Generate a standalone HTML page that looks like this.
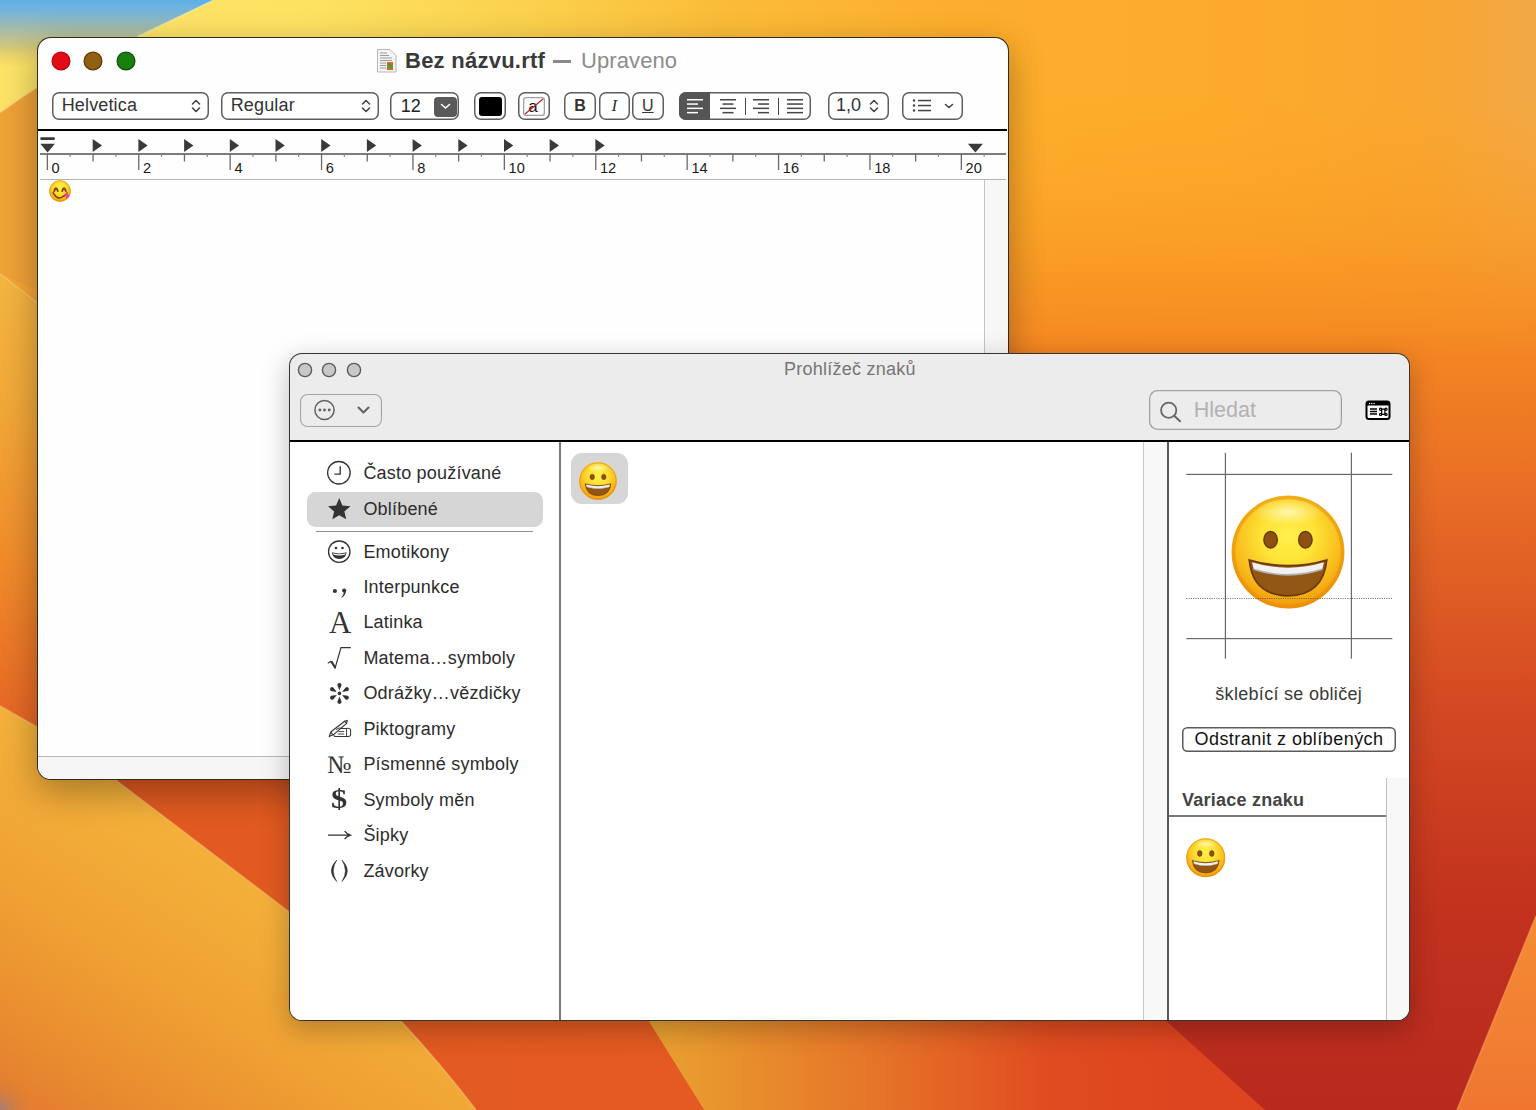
<!DOCTYPE html><html><head><meta charset="utf-8"><style>
html,body{margin:0;padding:0;} body{width:1536px;height:1110px;overflow:hidden;position:relative;font-family:"Liberation Sans", sans-serif;background:#f0a030;}
.t{position:absolute;white-space:nowrap;} .r{position:absolute;box-sizing:border-box;} svg.r{overflow:visible;}
</style></head><body>
<svg width="0" height="0" style="position:absolute">
<defs>
 <radialGradient id="gface" cx="0.5" cy="0.36" r="0.68">
  <stop offset="0" stop-color="#fff04a"/>
  <stop offset="0.35" stop-color="#fde336"/>
  <stop offset="0.7" stop-color="#f9bb1c"/>
  <stop offset="0.92" stop-color="#f19a08"/>
  <stop offset="1" stop-color="#ea8a04"/>
 </radialGradient>
 <radialGradient id="ghl" cx="0.5" cy="0.5" r="0.5">
  <stop offset="0" stop-color="#fffbd0" stop-opacity="0.8"/>
  <stop offset="1" stop-color="#fff8a0" stop-opacity="0"/>
 </radialGradient>
 <symbol id="grin" viewBox="-1 -1 2 2">
  <circle cx="0" cy="0" r="0.99" fill="url(#gface)"/>
  <circle cx="0" cy="0" r="0.955" fill="none" stroke="#e8860a" stroke-width="0.06" opacity="0.5"/>
  <ellipse cx="0" cy="-0.7" rx="0.62" ry="0.24" fill="url(#ghl)"/>
  <ellipse cx="-0.305" cy="-0.215" rx="0.118" ry="0.146" fill="#8c5010" stroke="#6a3806" stroke-width="0.025"/>
  <ellipse cx="0.305" cy="-0.215" rx="0.118" ry="0.146" fill="#8c5010" stroke="#6a3806" stroke-width="0.025"/>
  <path d="M-0.68 0.14 Q0 0.34 0.68 0.14 Q0.62 0.76 0 0.77 Q-0.62 0.76 -0.68 0.14 Z" fill="#925614" stroke="#6a3806" stroke-width="0.03"/>
  <path d="M-0.63 0.18 Q0 0.37 0.63 0.18 L0.60 0.31 Q0 0.50 -0.60 0.31 Z" fill="#f1f1f1"/>
  <path d="M-0.60 0.29 Q0 0.48 0.60 0.29 L0.59 0.32 Q0 0.51 -0.59 0.32 Z" fill="#b0b0b0"/>
 </symbol>
 <symbol id="yum" viewBox="-1 -1 2 2">
  <circle cx="0" cy="0" r="0.98" fill="url(#gface)"/>
  <circle cx="0" cy="0" r="0.94" fill="none" stroke="#e88400" stroke-width="0.08" opacity="0.6"/>
  <path d="M-0.52 0.0 Q-0.37 -0.5 -0.2 0.0" fill="none" stroke="#7a3e06" stroke-width="0.17" stroke-linecap="round"/>
  <path d="M0.2 0.0 Q0.37 -0.5 0.52 0.0" fill="none" stroke="#7a3e06" stroke-width="0.17" stroke-linecap="round"/>
  <path d="M-0.63 0.14 Q-0.3 0.75 0.1 0.6 Q0.45 0.5 0.64 0.18" fill="none" stroke="#7a3e06" stroke-width="0.13" stroke-linecap="round"/>
  <path d="M0.42 0.36 L0.62 0.16 L0.88 0.45 L0.62 0.72 Z" fill="#f0449a"/>
 </symbol>
</defs></svg>
<svg class="r" style="left:0;top:0" width="1536" height="1110">
<defs>
 <linearGradient id="wbase" gradientUnits="userSpaceOnUse" x1="0" y1="0" x2="0" y2="1110">
  <stop offset="0" stop-color="#fdab28"/>
  <stop offset="0.18" stop-color="#fa9a22"/>
  <stop offset="0.3" stop-color="#f58822"/>
  <stop offset="0.45" stop-color="#e86c26"/>
  <stop offset="0.63" stop-color="#d44a22"/>
  <stop offset="0.82" stop-color="#c2321e"/>
  <stop offset="1" stop-color="#b82a1e"/>
 </linearGradient>
 <linearGradient id="wtop" gradientUnits="userSpaceOnUse" x1="0" y1="0" x2="1536" y2="0">
  <stop offset="0" stop-color="#fde468"/>
  <stop offset="0.2" stop-color="#fde262"/>
  <stop offset="0.35" stop-color="#fbd04c"/>
  <stop offset="0.47" stop-color="#fbbc38"/>
  <stop offset="0.62" stop-color="#fdae2c"/>
  <stop offset="0.8" stop-color="#fdaa2a"/>
  <stop offset="0.93" stop-color="#f8a632"/>
  <stop offset="1" stop-color="#f2a846"/>
 </linearGradient>
 <linearGradient id="mtop" x1="0" y1="0" x2="0" y2="1">
  <stop offset="0" stop-color="#fff"/>
  <stop offset="0.2" stop-color="#fff"/>
  <stop offset="0.75" stop-color="#000"/>
  <stop offset="1" stop-color="#000"/>
 </linearGradient>
 <mask id="mtopm" maskUnits="userSpaceOnUse" x="0" y="0" width="1536" height="480"><rect x="0" y="0" width="1536" height="480" fill="url(#mtop)"/></mask>
 <linearGradient id="wblue" gradientUnits="userSpaceOnUse" x1="0" y1="0" x2="0" y2="80">
  <stop offset="0" stop-color="#5eb0e8"/>
  <stop offset="0.15" stop-color="#78b4d8"/>
  <stop offset="0.38" stop-color="#a8bca8"/>
  <stop offset="0.6" stop-color="#d4c878"/>
  <stop offset="0.85" stop-color="#f0d060" stop-opacity="0"/>
 </linearGradient>
 <linearGradient id="wleft" gradientUnits="userSpaceOnUse" x1="0" y1="270" x2="0" y2="730">
  <stop offset="0" stop-color="#f4b642"/>
  <stop offset="0.3" stop-color="#f2a838"/>
  <stop offset="0.65" stop-color="#f08a2a"/>
  <stop offset="1" stop-color="#e66424"/>
 </linearGradient>
 <linearGradient id="wpetal" gradientUnits="userSpaceOnUse" x1="200" y1="820" x2="20" y2="1110">
  <stop offset="0" stop-color="#f4b23c"/>
  <stop offset="0.45" stop-color="#f0a233"/>
  <stop offset="0.8" stop-color="#e98c2f"/>
  <stop offset="1" stop-color="#e37c30"/>
 </linearGradient>
 <linearGradient id="wband" gradientUnits="userSpaceOnUse" x1="0" y1="800" x2="700" y2="1110">
  <stop offset="0" stop-color="#e05a20"/>
  <stop offset="1" stop-color="#e45a22"/>
 </linearGradient>
 <linearGradient id="wlight" gradientUnits="userSpaceOnUse" x1="660" y1="0" x2="1200" y2="0">
  <stop offset="0" stop-color="#e9a030"/>
  <stop offset="0.4" stop-color="#e67428"/>
  <stop offset="0.72" stop-color="#e04c20"/>
  <stop offset="1" stop-color="#dd4420"/>
 </linearGradient>
 <linearGradient id="wtri" gradientUnits="userSpaceOnUse" x1="0" y1="930" x2="0" y2="1110">
  <stop offset="0" stop-color="#f48a34"/>
  <stop offset="1" stop-color="#f07630"/>
 </linearGradient>
 <radialGradient id="wbl" gradientUnits="userSpaceOnUse" cx="0" cy="1110" r="34">
  <stop offset="0" stop-color="#6a80c0" stop-opacity="0.9"/>
  <stop offset="1" stop-color="#e07a30" stop-opacity="0"/>
 </radialGradient>
</defs>
<rect x="0" y="0" width="1536" height="1110" fill="url(#wbase)"/>
<rect x="0" y="0" width="1536" height="480" fill="url(#wtop)" mask="url(#mtopm)"/>
<!-- left strip: orange below yellow -->
<path d="M0 112.5 Q20 98 60 72 L60 300 L0 274 Z" fill="#efa236"/>
<path d="M0 274 L60 320 L60 740 L0 706 Z" fill="url(#wleft)"/>
<path d="M0 274 L60 320" stroke="#f8d070" stroke-width="1.5" opacity="0.6"/>
<path d="M0 112.5 Q20 98 60 72" stroke="#f8e090" stroke-width="1.5" opacity="0.6" fill="none"/>
<!-- blue corner -->
<path d="M0 0 L214 0 L137.5 36.7 L60 65 L0 90 Z" fill="url(#wblue)"/>
<path d="M214 0 L137.5 36.7" stroke="#e8f0b0" stroke-width="1.5" opacity="0.7"/>
<!-- red-orange band -->
<path d="M37 727 L117 781 L288 911 Q400 1010 476 1110 L704 1110 L648 1020 L560 860 L400 700 L40 700 Z" fill="url(#wband)"/>
<!-- bottom-left light petal -->
<path d="M0 706 L37 727 L117 781 L288 911 Q400 1010 476 1110 L0 1110 Z" fill="url(#wpetal)"/>
<path d="M0 706 L37 727 L117 781 L288 911 Q400 1010 476 1110" stroke="#f8c878" stroke-width="1.5" fill="none" opacity="0.55"/>
<rect x="0" y="1075" width="35" height="35" fill="url(#wbl)" opacity="0.55"/>
<!-- light band -->
<path d="M600 940 L648 1020 L704 1110 L1265 1110 L1165 1020 L1080 940 Z" fill="url(#wlight)"/>
<!-- bottom-right light triangle -->
<path d="M1536 916 L1457 1110 L1536 1110 Z" fill="url(#wtri)"/>
<path d="M1536 916 L1457 1110" stroke="#f8a060" stroke-width="1.5" opacity="0.6"/>
</svg>
<div class="r" style="left:37.00px;top:37.00px;width:972.00px;height:743.00px;background:#fefefe;border-radius:14px;border:1.4px solid rgba(20,12,0,0.88);box-shadow:0 12px 36px rgba(0,0,0,0.32);"></div>
<div class="r" style="left:38.00px;top:756.00px;width:970.00px;height:23.00px;background:#f6f6f6;border-radius:0px;border-radius:0 0 13px 13px;"></div>
<div class="r" style="left:38.00px;top:755.50px;width:970.00px;height:1.00px;background:#b8b8b8;border-radius:0px;"></div>
<div class="r" style="left:984.50px;top:180.00px;width:23.50px;height:576.00px;background:#f7f7f7;border-radius:0px;"></div>
<div class="r" style="left:984.00px;top:180.00px;width:1.20px;height:576.00px;background:#c4c4c4;border-radius:0px;"></div>
<svg class="r" style="left:51.20px;top:51.10px;" width="20" height="20" viewBox="0 0 20 20"><circle cx="10" cy="10" r="8.9" fill="#e30b14" stroke="#b8080e" stroke-width="1.3"/></svg>
<svg class="r" style="left:83.40px;top:51.10px;" width="20" height="20" viewBox="0 0 20 20"><circle cx="10" cy="10" r="8.9" fill="#935f10" stroke="#643806" stroke-width="1.3"/></svg>
<svg class="r" style="left:115.60px;top:51.10px;" width="20" height="20" viewBox="0 0 20 20"><circle cx="10" cy="10" r="8.9" fill="#18800e" stroke="#0c5208" stroke-width="1.3"/></svg>
<svg class="r" style="left:376.00px;top:49.00px;" width="21" height="24" viewBox="0 0 21 24"><path d="M1.5 0.5 H14 L20 6.5 V23 H1.5 Z" fill="#f4f4f4" stroke="#b8b8b8" stroke-width="1"/><path d="M4 4h7M4 6.5h9M4 9h12M4 11.5h12M4 14h6M4 16.5h6M4 19h6" stroke="#9a9a9a" stroke-width="1"/><rect x="11" y="13" width="6" height="8" fill="#d06a20"/><rect x="12" y="15" width="4" height="4" fill="#5a9a30"/></svg>
<div class="t" style="left:405.00px;top:50.08px;font-size:22px;line-height:22px;color:#3a3a3a;font-weight:700;letter-spacing:0.25px;">Bez názvu.rtf</div>
<div class="r" style="left:553.30px;top:60.00px;width:17.90px;height:2.80px;background:#8a8a8a;border-radius:0px;"></div>
<div class="t" style="left:581.00px;top:50.08px;font-size:22px;line-height:22px;color:#8c8c8c;font-weight:400;letter-spacing:0.1px;">Upraveno</div>
<div class="r" style="left:52.20px;top:92.20px;width:156.70px;height:28.30px;background:#fff;border-radius:7px;box-shadow: inset 0 0 0 1.5px #5e5e5e;"></div>
<div class="t" style="left:61.70px;top:95.76px;font-size:18px;line-height:18px;color:#333;font-weight:400;letter-spacing:0.15px;">Helvetica</div>
<svg class="r" style="left:190.90px;top:99.00px;" width="10" height="14" viewBox="0 0 10 14"><path d="M1.5 5 L5 1.5 L8.5 5 M1.5 9 L5 12.5 L8.5 9" fill="none" stroke="#444" stroke-width="1.6" stroke-linecap="round" stroke-linejoin="round"/></svg>
<div class="r" style="left:221.20px;top:92.20px;width:157.50px;height:28.30px;background:#fff;border-radius:7px;box-shadow: inset 0 0 0 1.5px #5e5e5e;"></div>
<div class="t" style="left:230.70px;top:95.76px;font-size:18px;line-height:18px;color:#333;font-weight:400;letter-spacing:0.15px;">Regular</div>
<svg class="r" style="left:360.70px;top:99.00px;" width="10" height="14" viewBox="0 0 10 14"><path d="M1.5 5 L5 1.5 L8.5 5 M1.5 9 L5 12.5 L8.5 9" fill="none" stroke="#444" stroke-width="1.6" stroke-linecap="round" stroke-linejoin="round"/></svg>
<div class="r" style="left:390.30px;top:92.20px;width:68.50px;height:28.30px;background:#fff;border-radius:7px;box-shadow: inset 0 0 0 1.5px #5e5e5e;"></div>
<div class="t" style="left:400.80px;top:96.76px;font-size:18px;line-height:18px;color:#222;font-weight:400;letter-spacing:0px;">12</div>
<div class="r" style="left:434.00px;top:96.60px;width:22.70px;height:20.60px;background:#5a5a5a;border-radius:4px;"></div>
<svg class="r" style="left:440.00px;top:103.00px;" width="11" height="7" viewBox="0 0 11 7"><path d="M1.5 1.5 L5.5 5 L9.5 1.5" fill="none" stroke="#fff" stroke-width="1.6" stroke-linecap="round" stroke-linejoin="round"/></svg>
<div class="r" style="left:473.90px;top:92.20px;width:32.20px;height:28.30px;background:#fff;border-radius:7px;box-shadow: inset 0 0 0 1.5px #5e5e5e;"></div>
<div class="r" style="left:478.50px;top:96.80px;width:23.00px;height:19.20px;background:#000;border-radius:3px;"></div>
<div class="r" style="left:518.00px;top:92.20px;width:31.50px;height:28.30px;background:#fff;border-radius:7px;box-shadow: inset 0 0 0 1.5px #5e5e5e;"></div>
<div class="r" style="left:522.50px;top:96.80px;width:22.50px;height:19.20px;background:#fff;border-radius:3px;box-shadow: inset 0 0 0 1.3px #a0a0a0;"></div>
<div class="t" style="left:528.20px;top:97.61px;font-size:17px;line-height:17px;color:#111;font-weight:400;letter-spacing:0px;">a</div>
<svg class="r" style="left:523.00px;top:97.00px;" width="22" height="19" viewBox="0 0 22 19"><path d="M2 17 L20 2" stroke="#d42020" stroke-width="1.2"/></svg>
<div class="r" style="left:564.00px;top:92.20px;width:32.30px;height:28.30px;background:#fff;border-radius:7px;box-shadow: inset 0 0 0 1.5px #5e5e5e;"></div>
<div class="t" style="left:580.15px;top:97.96px;font-size:16px;line-height:16px;color:#333;font-weight:400;letter-spacing:0px;transform:translateX(-50%);font-weight:700;">B</div>
<div class="r" style="left:598.50px;top:92.20px;width:31.50px;height:28.30px;background:#fff;border-radius:7px;box-shadow: inset 0 0 0 1.5px #5e5e5e;"></div>
<div class="t" style="left:614.25px;top:97.96px;font-size:16px;line-height:16px;color:#333;font-weight:400;letter-spacing:0px;transform:translateX(-50%);font-style:italic;font-family:'Liberation Serif',serif;font-size:17px;">I</div>
<div class="r" style="left:632.00px;top:92.20px;width:31.80px;height:28.30px;background:#fff;border-radius:7px;box-shadow: inset 0 0 0 1.5px #5e5e5e;"></div>
<div class="t" style="left:647.90px;top:97.96px;font-size:16px;line-height:16px;color:#333;font-weight:400;letter-spacing:0px;transform:translateX(-50%);text-decoration:underline;">U</div>
<div class="r" style="left:678.90px;top:92.20px;width:132.30px;height:28.30px;background:#fff;border-radius:7px;box-shadow: inset 0 0 0 1.5px #5e5e5e;"></div>
<div class="r" style="left:678.90px;top:92.20px;width:31.50px;height:28.30px;background:#555;border-radius:7px;border-radius:7px 0 0 7px;"></div>
<svg class="r" style="left:686.50px;top:97.50px;" width="16" height="16" viewBox="0 0 16 16"><rect x="0" y="1.0" width="16" height="1.5" fill="#fff"/><rect x="0" y="5.3" width="11" height="1.5" fill="#fff"/><rect x="0" y="9.6" width="16" height="1.5" fill="#fff"/><rect x="0" y="13.899999999999999" width="11" height="1.5" fill="#fff"/></svg>
<svg class="r" style="left:720.00px;top:97.50px;" width="16" height="16" viewBox="0 0 16 16"><rect x="0.0" y="1.0" width="16" height="1.5" fill="#444"/><rect x="2.5" y="5.3" width="11" height="1.5" fill="#444"/><rect x="0.0" y="9.6" width="16" height="1.5" fill="#444"/><rect x="2.5" y="13.899999999999999" width="11" height="1.5" fill="#444"/></svg>
<div class="r" style="left:744.80px;top:97.50px;width:1.40px;height:17.50px;background:#444;border-radius:0px;"></div>
<svg class="r" style="left:753.00px;top:97.50px;" width="16" height="16" viewBox="0 0 16 16"><rect x="0" y="1.0" width="16" height="1.5" fill="#444"/><rect x="5" y="5.3" width="11" height="1.5" fill="#444"/><rect x="0" y="9.6" width="16" height="1.5" fill="#444"/><rect x="5" y="13.899999999999999" width="11" height="1.5" fill="#444"/></svg>
<div class="r" style="left:777.50px;top:97.50px;width:1.40px;height:17.50px;background:#444;border-radius:0px;"></div>
<svg class="r" style="left:787.00px;top:97.50px;" width="16" height="16" viewBox="0 0 16 16"><rect x="0" y="1.0" width="16" height="1.5" fill="#444"/><rect x="0" y="5.3" width="16" height="1.5" fill="#444"/><rect x="0" y="9.6" width="16" height="1.5" fill="#444"/><rect x="0" y="13.899999999999999" width="16" height="1.5" fill="#444"/></svg>
<div class="r" style="left:827.50px;top:92.20px;width:61.10px;height:28.30px;background:#fff;border-radius:7px;box-shadow: inset 0 0 0 1.5px #5e5e5e;"></div>
<div class="t" style="left:836.00px;top:95.76px;font-size:18px;line-height:18px;color:#333;font-weight:400;letter-spacing:0px;">1,0</div>
<svg class="r" style="left:869.00px;top:99.00px;" width="10" height="14" viewBox="0 0 10 14"><path d="M1.5 5 L5 1.5 L8.5 5 M1.5 9 L5 12.5 L8.5 9" fill="none" stroke="#444" stroke-width="1.6" stroke-linecap="round" stroke-linejoin="round"/></svg>
<div class="r" style="left:901.50px;top:92.20px;width:61.50px;height:28.30px;background:#fff;border-radius:7px;box-shadow: inset 0 0 0 1.5px #5e5e5e;"></div>
<svg class="r" style="left:912.00px;top:98.00px;" width="22" height="16" viewBox="0 0 22 16"><circle cx="2" cy="2.5" r="1.2" fill="#444"/><rect x="6" y="1.8" width="13" height="1.5" fill="#444"/><circle cx="2" cy="7.5" r="1.2" fill="#444"/><rect x="6" y="6.8" width="13" height="1.5" fill="#444"/><circle cx="2" cy="12.5" r="1.2" fill="#444"/><rect x="6" y="11.8" width="13" height="1.5" fill="#444"/></svg>
<svg class="r" style="left:944.00px;top:103.00px;" width="10" height="7" viewBox="0 0 10 7"><path d="M1.5 1.5 L5 4.5 L8.5 1.5" fill="none" stroke="#444" stroke-width="1.6" stroke-linecap="round" stroke-linejoin="round"/></svg>
<div class="r" style="left:38.00px;top:128.60px;width:968.50px;height:2.00px;background:#000;border-radius:0px;"></div>
<div class="r" style="left:40.00px;top:153.30px;width:966.00px;height:1.50px;background:#7c7c7c;border-radius:0px;"></div>
<svg class="r" style="left:0.00px;top:0.00px;" width="1536" height="200" viewBox="0 0 1536 200"><rect x="46.70" y="154" width="1.3" height="16" fill="#6a6a6a"/><rect x="69.55" y="154" width="1.2" height="3" fill="#8a8a8a"/><rect x="92.40" y="154" width="1.3" height="7.5" fill="#6a6a6a"/><rect x="115.25" y="154" width="1.2" height="3" fill="#8a8a8a"/><rect x="138.10" y="154" width="1.3" height="16" fill="#6a6a6a"/><rect x="160.95" y="154" width="1.2" height="3" fill="#8a8a8a"/><rect x="183.80" y="154" width="1.3" height="7.5" fill="#6a6a6a"/><rect x="206.65" y="154" width="1.2" height="3" fill="#8a8a8a"/><rect x="229.50" y="154" width="1.3" height="16" fill="#6a6a6a"/><rect x="252.35" y="154" width="1.2" height="3" fill="#8a8a8a"/><rect x="275.20" y="154" width="1.3" height="7.5" fill="#6a6a6a"/><rect x="298.05" y="154" width="1.2" height="3" fill="#8a8a8a"/><rect x="320.90" y="154" width="1.3" height="16" fill="#6a6a6a"/><rect x="343.75" y="154" width="1.2" height="3" fill="#8a8a8a"/><rect x="366.60" y="154" width="1.3" height="7.5" fill="#6a6a6a"/><rect x="389.45" y="154" width="1.2" height="3" fill="#8a8a8a"/><rect x="412.30" y="154" width="1.3" height="16" fill="#6a6a6a"/><rect x="435.15" y="154" width="1.2" height="3" fill="#8a8a8a"/><rect x="458.00" y="154" width="1.3" height="7.5" fill="#6a6a6a"/><rect x="480.85" y="154" width="1.2" height="3" fill="#8a8a8a"/><rect x="503.70" y="154" width="1.3" height="16" fill="#6a6a6a"/><rect x="526.55" y="154" width="1.2" height="3" fill="#8a8a8a"/><rect x="549.40" y="154" width="1.3" height="7.5" fill="#6a6a6a"/><rect x="572.25" y="154" width="1.2" height="3" fill="#8a8a8a"/><rect x="595.10" y="154" width="1.3" height="16" fill="#6a6a6a"/><rect x="617.95" y="154" width="1.2" height="3" fill="#8a8a8a"/><rect x="640.80" y="154" width="1.3" height="7.5" fill="#6a6a6a"/><rect x="663.65" y="154" width="1.2" height="3" fill="#8a8a8a"/><rect x="686.50" y="154" width="1.3" height="16" fill="#6a6a6a"/><rect x="709.35" y="154" width="1.2" height="3" fill="#8a8a8a"/><rect x="732.20" y="154" width="1.3" height="7.5" fill="#6a6a6a"/><rect x="755.05" y="154" width="1.2" height="3" fill="#8a8a8a"/><rect x="777.90" y="154" width="1.3" height="16" fill="#6a6a6a"/><rect x="800.75" y="154" width="1.2" height="3" fill="#8a8a8a"/><rect x="823.60" y="154" width="1.3" height="7.5" fill="#6a6a6a"/><rect x="846.45" y="154" width="1.2" height="3" fill="#8a8a8a"/><rect x="869.30" y="154" width="1.3" height="16" fill="#6a6a6a"/><rect x="892.15" y="154" width="1.2" height="3" fill="#8a8a8a"/><rect x="915.00" y="154" width="1.3" height="7.5" fill="#6a6a6a"/><rect x="937.85" y="154" width="1.2" height="3" fill="#8a8a8a"/><rect x="960.70" y="154" width="1.3" height="16" fill="#6a6a6a"/><rect x="983.55" y="154" width="1.2" height="3" fill="#8a8a8a"/><path d="M92.70 139 L102.00 145.5 L92.70 152 Z" fill="#3a3a3a"/><path d="M138.40 139 L147.70 145.5 L138.40 152 Z" fill="#3a3a3a"/><path d="M184.10 139 L193.40 145.5 L184.10 152 Z" fill="#3a3a3a"/><path d="M229.80 139 L239.10 145.5 L229.80 152 Z" fill="#3a3a3a"/><path d="M275.50 139 L284.80 145.5 L275.50 152 Z" fill="#3a3a3a"/><path d="M321.20 139 L330.50 145.5 L321.20 152 Z" fill="#3a3a3a"/><path d="M366.90 139 L376.20 145.5 L366.90 152 Z" fill="#3a3a3a"/><path d="M412.60 139 L421.90 145.5 L412.60 152 Z" fill="#3a3a3a"/><path d="M458.30 139 L467.60 145.5 L458.30 152 Z" fill="#3a3a3a"/><path d="M504.00 139 L513.30 145.5 L504.00 152 Z" fill="#3a3a3a"/><path d="M549.70 139 L559.00 145.5 L549.70 152 Z" fill="#3a3a3a"/><path d="M595.40 139 L604.70 145.5 L595.40 152 Z" fill="#3a3a3a"/><rect x="40.3" y="137.3" width="14.6" height="2.8" rx="1" fill="#3a3a3a"/><path d="M40.3 143.8 L54.9 143.8 L47.6 152.4 Z" fill="#3a3a3a"/><path d="M967.90 143.8 L982.90 143.8 L975.40 152.4 Z" fill="#3a3a3a"/></svg>
<div class="t" style="left:51.60px;top:161.44px;font-size:14.6px;line-height:14.6px;color:#1a1a1a;font-weight:400;letter-spacing:0px;">0</div>
<div class="t" style="left:143.00px;top:161.44px;font-size:14.6px;line-height:14.6px;color:#1a1a1a;font-weight:400;letter-spacing:0px;">2</div>
<div class="t" style="left:234.40px;top:161.44px;font-size:14.6px;line-height:14.6px;color:#1a1a1a;font-weight:400;letter-spacing:0px;">4</div>
<div class="t" style="left:325.80px;top:161.44px;font-size:14.6px;line-height:14.6px;color:#1a1a1a;font-weight:400;letter-spacing:0px;">6</div>
<div class="t" style="left:417.20px;top:161.44px;font-size:14.6px;line-height:14.6px;color:#1a1a1a;font-weight:400;letter-spacing:0px;">8</div>
<div class="t" style="left:508.60px;top:161.44px;font-size:14.6px;line-height:14.6px;color:#1a1a1a;font-weight:400;letter-spacing:0px;">10</div>
<div class="t" style="left:600.00px;top:161.44px;font-size:14.6px;line-height:14.6px;color:#1a1a1a;font-weight:400;letter-spacing:0px;">12</div>
<div class="t" style="left:691.40px;top:161.44px;font-size:14.6px;line-height:14.6px;color:#1a1a1a;font-weight:400;letter-spacing:0px;">14</div>
<div class="t" style="left:782.80px;top:161.44px;font-size:14.6px;line-height:14.6px;color:#1a1a1a;font-weight:400;letter-spacing:0px;">16</div>
<div class="t" style="left:874.20px;top:161.44px;font-size:14.6px;line-height:14.6px;color:#1a1a1a;font-weight:400;letter-spacing:0px;">18</div>
<div class="t" style="left:965.60px;top:161.44px;font-size:14.6px;line-height:14.6px;color:#1a1a1a;font-weight:400;letter-spacing:0px;">20</div>
<div class="r" style="left:40.00px;top:179.00px;width:966.00px;height:1.20px;background:#b4b4b4;border-radius:0px;"></div>
<svg class="r" style="left:48.70px;top:179.90px;" width="22" height="22" viewBox="0 0 22 22"><use href="#yum" x="0" y="0" width="22" height="22"/></svg>
<div class="r" style="left:289.00px;top:353.00px;width:1121.00px;height:668.00px;background:#ececec;border-radius:13px;border:1.4px solid rgba(0,0,0,0.78);box-shadow:0 8px 28px rgba(0,0,0,0.26);"></div>
<div class="r" style="left:290.20px;top:442.00px;width:1118.60px;height:577.80px;background:#fff;border-radius:0px;border-radius:0 0 12px 12px;"></div>
<svg class="r" style="left:297.20px;top:361.70px;" width="16" height="16" viewBox="0 0 16 16"><circle cx="8" cy="8" r="6.6" fill="#c8c8c8" stroke="#5c5c5c" stroke-width="1.4"/></svg>
<svg class="r" style="left:321.40px;top:361.70px;" width="16" height="16" viewBox="0 0 16 16"><circle cx="8" cy="8" r="6.6" fill="#c8c8c8" stroke="#5c5c5c" stroke-width="1.4"/></svg>
<svg class="r" style="left:345.60px;top:361.70px;" width="16" height="16" viewBox="0 0 16 16"><circle cx="8" cy="8" r="6.6" fill="#c8c8c8" stroke="#5c5c5c" stroke-width="1.4"/></svg>
<div class="t" style="left:849.90px;top:359.96px;font-size:18px;line-height:18px;color:#767676;font-weight:400;letter-spacing:0.25px;transform:translateX(-50%);">Prohlížeč znaků</div>
<div class="r" style="left:300.30px;top:393.50px;width:81.30px;height:33.00px;background:#ececec;border-radius:7.5px;box-shadow: inset 0 0 0 1.1px #a4a4a4;"></div>
<svg class="r" style="left:312.00px;top:398.00px;" width="26" height="24" viewBox="0 0 26 24"><circle cx="12.5" cy="12" r="9.6" fill="none" stroke="#636363" stroke-width="1.5"/><circle cx="7.9" cy="12" r="1.45" fill="#636363"/><circle cx="12.5" cy="12" r="1.45" fill="#636363"/><circle cx="17.2" cy="12" r="1.45" fill="#636363"/></svg>
<svg class="r" style="left:357.00px;top:406.00px;" width="14" height="9" viewBox="0 0 14 9"><path d="M1.5 1.5 L6.5 6.5 L11.5 1.5" fill="none" stroke="#636363" stroke-width="2.1" stroke-linecap="round" stroke-linejoin="round"/></svg>
<div class="r" style="left:1149.40px;top:390.40px;width:193.00px;height:39.30px;background:#ececec;border-radius:8.5px;box-shadow: inset 0 0 0 1.3px #a2a2a2;"></div>
<svg class="r" style="left:1158.00px;top:400.00px;" width="26" height="24" viewBox="0 0 26 24"><circle cx="10.7" cy="10.2" r="7.6" fill="none" stroke="#666" stroke-width="1.8"/><path d="M16.2 15.7 L22 21.2" stroke="#666" stroke-width="2" stroke-linecap="round"/></svg>
<div class="t" style="left:1193.80px;top:400.40px;font-size:21.5px;line-height:21.5px;color:#b2b2b2;font-weight:400;letter-spacing:0px;">Hledat</div>
<svg class="r" style="left:1365.00px;top:400.00px;" width="27" height="22" viewBox="0 0 27 22"><rect x="1.5" y="1.5" width="23" height="17.5" rx="2.5" fill="#fff" stroke="#000" stroke-width="2"/><rect x="1.5" y="1.5" width="23" height="4" fill="#000"/><circle cx="4.5" cy="3.5" r="0.7" fill="#fff"/><circle cx="6.8" cy="3.5" r="0.7" fill="#fff"/><circle cx="9.1" cy="3.5" r="0.7" fill="#fff"/><path d="M5 9h7M5 11.5h7M5 14h7" stroke="#000" stroke-width="1.3"/><g fill="none" stroke="#000" stroke-width="1.2"><circle cx="15.6" cy="9.2" r="1.1"/><circle cx="21" cy="9.2" r="1.1"/><circle cx="15.6" cy="14.4" r="1.1"/><circle cx="21" cy="14.4" r="1.1"/><path d="M16.7 9.2 H19.9 V14.4 H16.7 Z"/></g></svg>
<div class="r" style="left:290.20px;top:440.00px;width:1118.60px;height:2.00px;background:#000;border-radius:0px;"></div>
<div class="r" style="left:306.50px;top:491.50px;width:236.50px;height:35.50px;background:#d6d6d6;border-radius:8.5px;"></div>
<div class="r" style="left:316.00px;top:530.50px;width:217.00px;height:1.00px;background:#909090;border-radius:0px;"></div>
<div class="t" style="left:363.40px;top:463.76px;font-size:18px;line-height:18px;color:#2c2c2c;font-weight:400;letter-spacing:0.2px;">Často používané</div>
<div class="t" style="left:363.40px;top:499.56px;font-size:18px;line-height:18px;color:#2c2c2c;font-weight:400;letter-spacing:0.2px;">Oblíbené</div>
<div class="t" style="left:363.40px;top:542.66px;font-size:18px;line-height:18px;color:#2c2c2c;font-weight:400;letter-spacing:0.2px;">Emotikony</div>
<div class="t" style="left:363.40px;top:578.06px;font-size:18px;line-height:18px;color:#2c2c2c;font-weight:400;letter-spacing:0.2px;">Interpunkce</div>
<div class="t" style="left:363.40px;top:613.46px;font-size:18px;line-height:18px;color:#2c2c2c;font-weight:400;letter-spacing:0.2px;">Latinka</div>
<div class="t" style="left:363.40px;top:648.96px;font-size:18px;line-height:18px;color:#2c2c2c;font-weight:400;letter-spacing:0.2px;">Matema…symboly</div>
<div class="t" style="left:363.40px;top:684.36px;font-size:18px;line-height:18px;color:#2c2c2c;font-weight:400;letter-spacing:0.2px;">Odrážky…vězdičky</div>
<div class="t" style="left:363.40px;top:719.86px;font-size:18px;line-height:18px;color:#2c2c2c;font-weight:400;letter-spacing:0.2px;">Piktogramy</div>
<div class="t" style="left:363.40px;top:755.26px;font-size:18px;line-height:18px;color:#2c2c2c;font-weight:400;letter-spacing:0.2px;">Písmenné symboly</div>
<div class="t" style="left:363.40px;top:790.66px;font-size:18px;line-height:18px;color:#2c2c2c;font-weight:400;letter-spacing:0.2px;">Symboly měn</div>
<div class="t" style="left:363.40px;top:826.16px;font-size:18px;line-height:18px;color:#2c2c2c;font-weight:400;letter-spacing:0.2px;">Šipky</div>
<div class="t" style="left:363.40px;top:861.56px;font-size:18px;line-height:18px;color:#2c2c2c;font-weight:400;letter-spacing:0.2px;">Závorky</div>
<svg class="r" style="left:0.00px;top:0.00px;" width="1536" height="1110" viewBox="0 0 1536 1110"><circle cx="338.9" cy="472.7" r="11.25" fill="none" stroke="#333" stroke-width="1.35"/><path d="M340.2 466.2 V474.1 H334.4" fill="none" stroke="#333" stroke-width="1.35"/><path d="M339.25,498.00 L342.42,505.43 L350.47,506.15 L344.39,511.47 L346.19,519.35 L339.25,515.20 L332.31,519.35 L334.11,511.47 L328.03,506.15 L336.08,505.43 Z" fill="#333"/><circle cx="339.25" cy="551.65" r="10.7" fill="none" stroke="#333" stroke-width="1.35"/><circle cx="336.0" cy="548.0" r="1.35" fill="#333"/><circle cx="342.5" cy="548.0" r="1.35" fill="#333"/><path d="M331.9 552.3 Q339.25 554.6 346.6 552.3 Q346 558.9 339.25 559.0 Q332.5 558.9 331.9 552.3 Z" fill="#333"/><path d="M333.0 553.3 Q339.25 555.3 345.5 553.3 L345.2 554.6 Q339.25 556.6 333.3 554.6 Z" fill="#fff"/><circle cx="334.9" cy="591" r="2.1" fill="#333"/><circle cx="344.2" cy="590.6" r="2.1" fill="#333"/><path d="M345.9 591.2 Q345.6 595.6 341.8 597.8 L341.4 597.2 Q343.6 595.4 343.8 592.2 Z" fill="#333"/><path d="M327.8 663.2 L330.6 661.5 L335.2 667.6 L341 647.6 H350.8" fill="none" stroke="#333" stroke-width="1.2" stroke-linejoin="miter"/><path d="M330.4 661.6 L332.2 660.8 L335.6 666.4 L335.0 669.2 Z" fill="#333"/><path d="M339.45 690.40 L337.35 685.00 A2.1 2.1 0 0 1 341.55 685.00 Z" fill="#333"/><path d="M336.85 691.90 L331.13 691.02 A2.1 2.1 0 0 1 333.23 687.38 Z" fill="#333"/><path d="M336.85 694.90 L333.23 699.42 A2.1 2.1 0 0 1 331.13 695.78 Z" fill="#333"/><path d="M339.45 696.40 L341.55 701.80 A2.1 2.1 0 0 1 337.35 701.80 Z" fill="#333"/><path d="M342.05 694.90 L347.77 695.78 A2.1 2.1 0 0 1 345.67 699.42 Z" fill="#333"/><path d="M342.05 691.90 L345.67 687.38 A2.1 2.1 0 0 1 347.77 691.02 Z" fill="#333"/><circle cx="339.45" cy="693.4" r="1.8" fill="#333"/><path d="M329.2 736.6 L331 731.8 L344.6 721.2 L346.6 723.4 L333.6 734.6 Z" fill="none" stroke="#333" stroke-width="1.1" stroke-linejoin="round"/><path d="M330.8 732.2 L332.8 734.6 M344.6 721.2 L347.2 720.6 L346.6 723.4" fill="none" stroke="#333" stroke-width="1.1"/><path d="M336.2 729.6 Q339 727.2 341.5 728.4 H346.5 Q349.5 727.8 350.6 729.6 V735.2 Q349.5 737 346.5 736.4 H336.5 Q334.2 736.6 333.6 735.2" fill="none" stroke="#333" stroke-width="1.05"/><path d="M346.5 728.4 V736.4 M338.4 731.6 H344.2 M337.8 734 H344.2" fill="none" stroke="#333" stroke-width="0.9"/><path d="M328 835.2 H349.6 M344.6 831.2 Q347 834.2 350.3 835.2 Q347 836.2 344.6 839.2" fill="none" stroke="#333" stroke-width="1.3"/></svg>
<div class="t" style="left:329px;top:607.3px;line-height:1;font-family:'Liberation Serif',serif;font-size:31px;color:#333;">A</div>
<div class="t" style="left:327px;top:751.8px;line-height:1;font-family:'Liberation Serif',serif;font-size:25.5px;color:#333;">№</div>
<div class="t" style="left:331.0px;top:785.4px;line-height:1;font-family:'Liberation Serif',serif;font-size:27.5px;font-weight:700;color:#333;transform:scaleX(1.18);transform-origin:0 0;">$</div>
<svg class="r" style="left:0.00px;top:0.00px;" width="1536" height="1110" viewBox="0 0 1536 1110"><path d="M336.8 860 Q325.8 870.8 336.8 881.6 Q329.8 870.8 336.8 860 Z M341.9 860 Q352.9 870.8 341.9 881.6 Q348.9 870.8 341.9 860 Z" fill="#333" stroke="#333" stroke-width="0.5"/></svg>
<div class="r" style="left:559.20px;top:442.00px;width:1.80px;height:578.00px;background:#7c7c7c;border-radius:0px;"></div>
<div class="r" style="left:571.40px;top:452.80px;width:56.20px;height:51.20px;background:#d6d6d6;border-radius:11px;"></div>
<svg class="r" style="left:579.00px;top:461.60px;" width="38" height="38" viewBox="0 0 38 38"><use href="#grin" width="38" height="38"/></svg>
<div class="r" style="left:1143.20px;top:442.00px;width:24.10px;height:578.00px;background:#f8f8f8;border-radius:0px;"></div>
<div class="r" style="left:1143.00px;top:442.00px;width:1.20px;height:578.00px;background:#c8c8c8;border-radius:0px;"></div>
<div class="r" style="left:1166.60px;top:442.00px;width:2.00px;height:578.00px;background:#585858;border-radius:0px;"></div>
<svg class="r" style="left:0.00px;top:0.00px;" width="1536" height="1110" viewBox="0 0 1536 1110"><rect x="1224.8" y="452.7" width="1.2" height="206" fill="#6a6a6a"/><rect x="1350.8" y="452.7" width="1.2" height="206" fill="#6a6a6a"/><rect x="1186.3" y="473.8" width="206" height="1.2" fill="#6a6a6a"/><rect x="1186.3" y="638" width="206" height="1.2" fill="#6a6a6a"/></svg>
<svg class="r" style="left:1231.00px;top:495.00px;" width="114" height="114" viewBox="0 0 114 114"><use href="#grin" width="114" height="114"/></svg>
<svg class="r" style="left:0.00px;top:0.00px;" width="1536" height="1110" viewBox="0 0 1536 1110"><line x1="1186.3" y1="598.5" x2="1392" y2="598.5" stroke="#5a5a5a" stroke-width="1.1" stroke-dasharray="1.1 1.2" opacity="0.85"/></svg>
<div class="t" style="left:1288.70px;top:685.26px;font-size:18px;line-height:18px;color:#3a3a3a;font-weight:400;letter-spacing:0.3px;transform:translateX(-50%);">šklebící se obličej</div>
<div class="r" style="left:1182.00px;top:727.00px;width:214.00px;height:25.30px;background:#fff;border-radius:5.5px;box-shadow: inset 0 0 0 1.5px #5a5a5a;"></div>
<div class="t" style="left:1289.00px;top:730.26px;font-size:18px;line-height:18px;color:#111;font-weight:400;letter-spacing:0.45px;transform:translateX(-50%);">Odstranit z oblíbených</div>
<div class="r" style="left:1386.50px;top:778.40px;width:22.30px;height:241.40px;background:#f8f8f8;border-radius:0px;border-radius:0 0 12px 0;"></div>
<div class="r" style="left:1385.80px;top:778.40px;width:1.40px;height:241.60px;background:#c0c0c0;border-radius:0px;"></div>
<div class="t" style="left:1182.00px;top:790.76px;font-size:18px;line-height:18px;color:#444;font-weight:700;letter-spacing:0.25px;">Variace znaku</div>
<div class="r" style="left:1168.60px;top:815.20px;width:217.40px;height:1.80px;background:#7a7a7a;border-radius:0px;"></div>
<svg class="r" style="left:1186.00px;top:838.00px;" width="40" height="40" viewBox="0 0 40 40"><use href="#grin" width="39.5" height="39.5"/></svg>
</body></html>
